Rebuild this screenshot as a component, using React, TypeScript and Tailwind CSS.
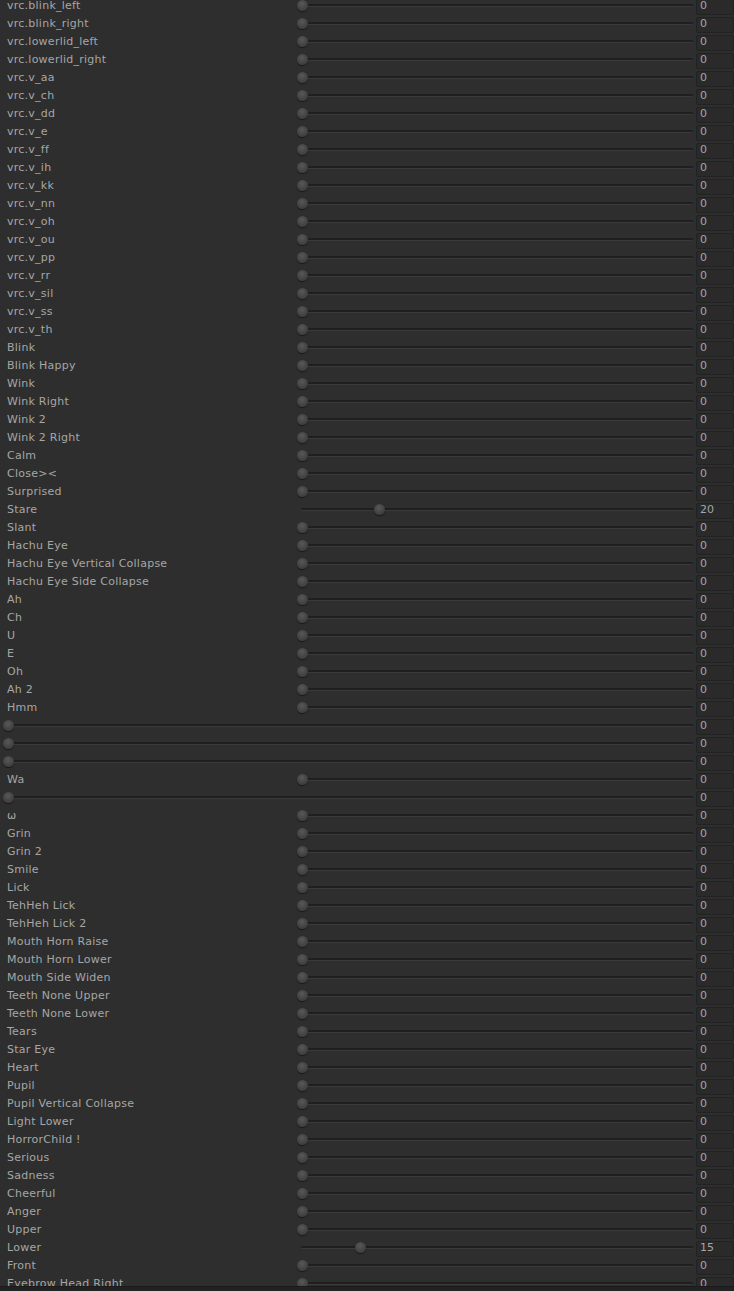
const shapes: { name: string; value: number }[] = [
  { name: "vrc.blink_left", value: 0 },
  { name: "vrc.blink_right", value: 0 },
  { name: "vrc.lowerlid_left", value: 0 },
  { name: "vrc.lowerlid_right", value: 0 },
  { name: "vrc.v_aa", value: 0 },
  { name: "vrc.v_ch", value: 0 },
  { name: "vrc.v_dd", value: 0 },
  { name: "vrc.v_e", value: 0 },
  { name: "vrc.v_ff", value: 0 },
  { name: "vrc.v_ih", value: 0 },
  { name: "vrc.v_kk", value: 0 },
  { name: "vrc.v_nn", value: 0 },
  { name: "vrc.v_oh", value: 0 },
  { name: "vrc.v_ou", value: 0 },
  { name: "vrc.v_pp", value: 0 },
  { name: "vrc.v_rr", value: 0 },
  { name: "vrc.v_sil", value: 0 },
  { name: "vrc.v_ss", value: 0 },
  { name: "vrc.v_th", value: 0 },
  { name: "Blink", value: 0 },
  { name: "Blink Happy", value: 0 },
  { name: "Wink", value: 0 },
  { name: "Wink Right", value: 0 },
  { name: "Wink 2", value: 0 },
  { name: "Wink 2 Right", value: 0 },
  { name: "Calm", value: 0 },
  { name: "Close><", value: 0 },
  { name: "Surprised", value: 0 },
  { name: "Stare", value: 20 },
  { name: "Slant", value: 0 },
  { name: "Hachu Eye", value: 0 },
  { name: "Hachu Eye Vertical Collapse", value: 0 },
  { name: "Hachu Eye Side Collapse", value: 0 },
  { name: "Ah", value: 0 },
  { name: "Ch", value: 0 },
  { name: "U", value: 0 },
  { name: "E", value: 0 },
  { name: "Oh", value: 0 },
  { name: "Ah 2", value: 0 },
  { name: "Hmm", value: 0 },
  { name: "", value: 0 },
  { name: "", value: 0 },
  { name: "", value: 0 },
  { name: "Wa", value: 0 },
  { name: "", value: 0 },
  { name: "ω", value: 0 },
  { name: "Grin", value: 0 },
  { name: "Grin 2", value: 0 },
  { name: "Smile", value: 0 },
  { name: "Lick", value: 0 },
  { name: "TehHeh Lick", value: 0 },
  { name: "TehHeh Lick 2", value: 0 },
  { name: "Mouth Horn Raise", value: 0 },
  { name: "Mouth Horn Lower", value: 0 },
  { name: "Mouth Side Widen", value: 0 },
  { name: "Teeth None Upper", value: 0 },
  { name: "Teeth None Lower", value: 0 },
  { name: "Tears", value: 0 },
  { name: "Star Eye", value: 0 },
  { name: "Heart", value: 0 },
  { name: "Pupil", value: 0 },
  { name: "Pupil Vertical Collapse", value: 0 },
  { name: "Light Lower", value: 0 },
  { name: "HorrorChild !", value: 0 },
  { name: "Serious", value: 0 },
  { name: "Sadness", value: 0 },
  { name: "Cheerful", value: 0 },
  { name: "Anger", value: 0 },
  { name: "Upper", value: 0 },
  { name: "Lower", value: 15 },
  { name: "Front", value: 0 },
  { name: "Eyebrow Head Right", value: 0 },
];

function Slider({ value }: { value: number }) {
  return (
    <div className="relative h-full flex-1">
      {/* track */}
      <div className="absolute left-[4px] right-0 top-[7px] h-[2px] rounded-full bg-[#1f1f1f]" />
      <div className="absolute left-[4px] right-[1px] top-[9px] h-[1px] rounded-full bg-[#3a3a3a]" />
      {/* thumb */}
      <div
        className="absolute top-[3px] h-[11px] w-[11px] rounded-full bg-[radial-gradient(circle_at_45%_35%,#585858,#3e3e3e_70%)] shadow-[0_1px_1px_rgba(0,0,0,0.5)]"
        style={{ left: `calc((100% - 11px) * ${value / 100})` }}
      />
    </div>
  );
}

export default function App() {
  return (
    <div
      className="flex h-[1291px] w-[734px] flex-col overflow-hidden bg-[#2e2e2e] text-[11px] text-[#a6a6a6]"
      style={{ fontFamily: '"DejaVu Sans", "Liberation Sans", sans-serif' }}
    >
      <div className="flex-1 overflow-hidden">
        <div className="mt-[-3px]">
          {shapes.map((s, i) => (
            <div key={i} className="flex h-[18px] items-center">
              {s.name !== "" ? (
                <div className="w-[297px] shrink-0 truncate pl-[7px] leading-[18px] tracking-[0.25px]">
                  {s.name}
                </div>
              ) : (
                <div className="w-[3px] shrink-0" />
              )}
              <Slider value={s.value} />
              <div className="ml-[3px] mt-[1px] flex h-[16px] w-[38px] shrink-0 items-center rounded-[2px] border border-[#222] bg-[#2a2a2a] pl-[3px] text-[#a6a6a6]">
                {s.value}
              </div>
            </div>
          ))}
        </div>
      </div>
      <div className="h-[5px] shrink-0 border-t border-[#1a1a1a] bg-[#222]" />
    </div>
  );
}
